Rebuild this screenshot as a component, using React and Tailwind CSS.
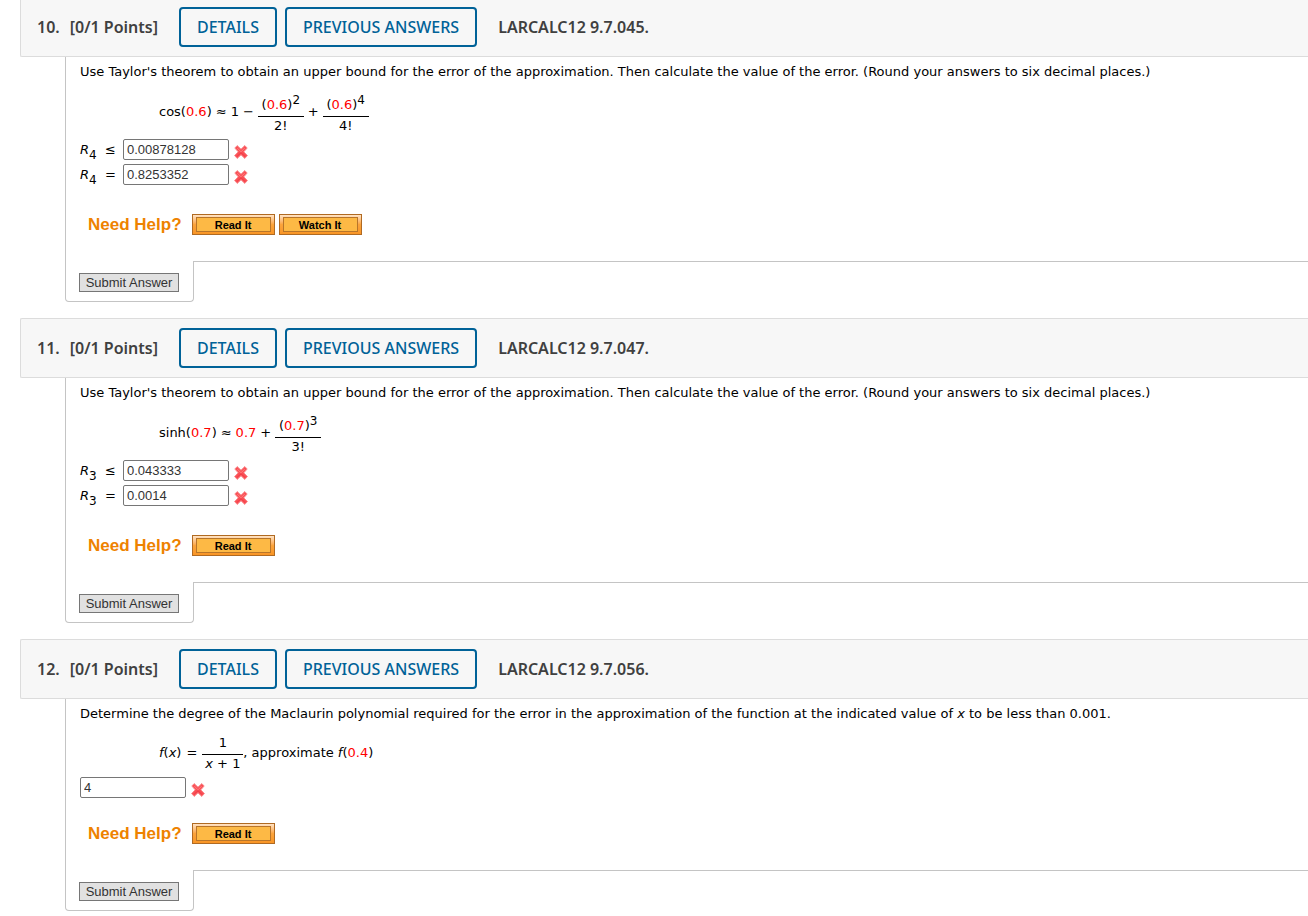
import * as React from "react"

const Red = ({ children }) => <span className="text-[#ff0000]">{children}</span>

const Sup = ({ children }) => (
    <sup className="relative -top-[5px] align-baseline text-xs leading-none">
        {children}
    </sup>
)

const Fraction = ({ top, bottom, className = "w-[46px]" }) => (
    <span className={`flex flex-col pt-px text-center leading-4 ${className}`}>
        <span className="border-b border-black pb-[3px] whitespace-nowrap">{top}</span>
        <span className="pt-px whitespace-nowrap">{bottom}</span>
    </span>
)

const WrongMark = () => (
    <svg
        viewBox="0 0 14 14"
        className="mt-[6px] h-[14px] w-[14px]"
        role="img"
        aria-label="Incorrect"
    >
        <path
            d="M3.2 .6 7 4.2 10.8 .6 13.2 3 9.8 6.8 13.4 10.6 10.8 13.4 7 9.8 3.2 13.4 .6 10.6 4.2 6.8 .8 3Z"
            fill="#fa4f55"
            stroke="#f98a8c"
            strokeWidth="1"
            strokeLinejoin="round"
        />
        <path d="M3.4 3.2 7 6.8 10.6 3.2" fill="none" stroke="#ff8080" strokeWidth="1" />
        <path d="M3.2 11.2 7 7.8 10.8 11.2" fill="none" stroke="#f03c46" strokeWidth="1" />
    </svg>
)

const AnswerInput = ({ id, value, ...props }) => (
    <div className="flex gap-[5px]">
        <input
            id={id}
            type="text"
            defaultValue={value}
            className="h-[21px] w-[106px] rounded-[2px] border border-[#767676] bg-white px-[3px] font-['Liberation_Sans',Arial,sans-serif] text-[13px] text-[#333333]"
            {...props}
        />
        <WrongMark />
    </div>
)

const RemainderRow = ({ id, degree, sign, value }) => (
    <div className="flex h-[21px]">
        <label htmlFor={id} className="flex w-[43px] pt-[3px] leading-4">
            <span className="w-[25px]">
                <i>R</i>
                <sub className="relative top-[5px] align-baseline text-xs leading-none">
                    {degree}
                </sub>
            </span>
            <span>{sign}</span>
        </label>
        <AnswerInput id={id} value={value} />
    </div>
)

const HeaderButton = ({ children }) => (
    <button
        type="button"
        className="h-10 shrink-0 rounded-[4px] border-2 border-[#006298] px-4 font-medium text-[#006298]"
    >
        {children}
    </button>
)

const HelpButton = ({ children }) => (
    <button
        type="button"
        className="h-[21px] w-[83px] border border-[#b06a22] bg-linear-to-b from-[#ffe3c4] via-[#fba43c] to-[#f99525] px-[3px] font-['Liberation_Sans',Arial,sans-serif] text-[11px] leading-3 font-bold text-black"
    >
        <span className="block border border-[#b8752a] bg-[#fdb945] pt-px">{children}</span>
    </button>
)

const Question = ({ number, code, prompt, help, promptGap = "mb-4", children }) => (
    <section className="mb-4">
        <header className="flex h-[60px] items-center rounded-l-[2px] border border-r-0 border-[#dcdcdc] bg-[#f7f7f7] pl-4 font-['Noto_Sans','Open_Sans',sans-serif] text-base whitespace-nowrap text-[#404040]">
            <h2 className="mr-[21px] flex gap-[10px] font-semibold">
                <span>{number}.</span>
                <span>[0/1 Points]</span>
            </h2>
            <div className="mr-[21px] flex gap-2">
                <HeaderButton>DETAILS</HeaderButton>
                <HeaderButton>PREVIOUS ANSWERS</HeaderButton>
            </div>
            <strong className="font-semibold">{code}</strong>
        </header>

        <div className="ml-[45px] border-l border-[#c4c4c4] pt-[7px] pl-[14px]">
            <p className={`leading-4 ${promptGap}`}>{prompt}</p>
            {children}
            <div className="mt-[25px] flex items-center gap-1 pb-[26px] pl-2">
                <span className="mr-[6px] font-['Liberation_Sans',Arial,sans-serif] text-[17px] leading-5 font-bold text-[#ee8200]">
                    Need Help?
                </span>
                {help.map((name) => (
                    <HelpButton key={name}>{name}</HelpButton>
                ))}
            </div>
        </div>

        <div className="ml-[45px] flex">
            <div className="h-[41px] w-[129px] rounded-b-[4px] border border-t-0 border-[#c4c4c4] pt-3 pl-[13px]">
                <button
                    type="button"
                    className="block h-[19px] w-[100px] border border-[#767676] bg-[#e1e1e1] font-['Liberation_Sans',Arial,sans-serif] text-[13px] leading-4 text-[#333333]"
                >
                    Submit Answer
                </button>
            </div>
            <div className="flex-1 border-t border-[#c4c4c4]" />
        </div>
    </section>
)

const errorPrompt =
    "Use Taylor's theorem to obtain an upper bound for the error of the approximation. Then calculate the value of the error. (Round your answers to six decimal places.)"

export default function App() {
    return (
        <div className="overflow-hidden bg-white font-['DejaVu_Sans',Verdana,sans-serif] text-[13px] text-black">
            <main className="-mt-[3px] pl-5">
                <Question
                    number={10}
                    code="LARCALC12 9.7.045."
                    prompt={errorPrompt}
                    help={["Read It", "Watch It"]}
                >
                    <div className="mb-[5px] flex gap-1 pl-[79px] leading-4">
                        <span className="pt-2">cos(<Red>0.6</Red>)</span>
                        <span className="pt-2">≈</span>
                        <span className="pt-2">1</span>
                        <span className="pt-2">−</span>
                        <Fraction top={<>(<Red>0.6</Red>)<Sup>2</Sup></>} bottom="2!" />
                        <span className="pt-2">+</span>
                        <Fraction top={<>(<Red>0.6</Red>)<Sup>4</Sup></>} bottom="4!" />
                    </div>
                    <div className="flex flex-col gap-1 pb-1">
                        <RemainderRow id="q10-bound" degree={4} sign="≤" value="0.00878128" />
                        <RemainderRow id="q10-error" degree={4} sign="=" value="0.8253352" />
                    </div>
                </Question>

                <Question
                    number={11}
                    code="LARCALC12 9.7.047."
                    prompt={errorPrompt}
                    help={["Read It"]}
                >
                    <div className="mb-[5px] flex gap-1 pl-[79px] leading-4">
                        <span className="pt-2">sinh(<Red>0.7</Red>)</span>
                        <span className="pt-2">≈</span>
                        <span className="pt-2"><Red>0.7</Red></span>
                        <span className="pt-2">+</span>
                        <Fraction top={<>(<Red>0.7</Red>)<Sup>3</Sup></>} bottom="3!" />
                    </div>
                    <div className="flex flex-col gap-1 pb-1">
                        <RemainderRow id="q11-bound" degree={3} sign="≤" value="0.043333" />
                        <RemainderRow id="q11-error" degree={3} sign="=" value="0.0014" />
                    </div>
                </Question>

                <Question
                    number={12}
                    code="LARCALC12 9.7.056."
                    prompt={
                        <>
                            Determine the degree of the Maclaurin polynomial required for the error in the
                            approximation of the function at the indicated value of <i>x</i> to be less than
                            0.001.
                        </>
                    }
                    help={["Read It"]}
                    promptGap="mb-3"
                >
                    <div className="mb-[5px] flex pl-[79px] leading-4">
                        <span className="pt-[11px] pr-[5px]"><i>f</i>(<i>x</i>)</span>
                        <span className="pt-[11px] pr-[5px]">=</span>
                        <Fraction className="w-[41px]" top="1" bottom={<><i>x</i> + 1</>} />
                        <span className="pt-[11px]">, approximate <i>f</i>(<Red>0.4</Red>)</span>
                    </div>
                    <AnswerInput value="4" aria-label="Degree of the Maclaurin polynomial" />
                </Question>
            </main>
        </div>
    )
}
